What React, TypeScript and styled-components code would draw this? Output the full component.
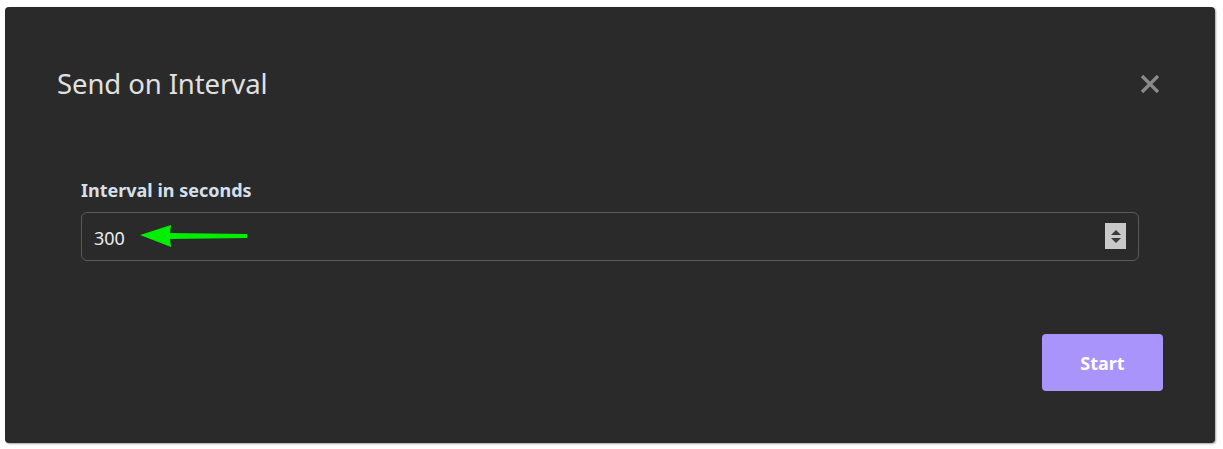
import React from "react";
import styled, { createGlobalStyle } from "styled-components";

const Global = createGlobalStyle`
  html, body { margin: 0; padding: 0; background: #ffffff; }
  body { font-family: "Noto Sans", "Open Sans", sans-serif; }
  * { box-sizing: border-box; }
`;

const Page = styled.div`
  padding: 7px 8px 6px 5px;
  width: 1223px;
  height: 449px;
`;

const Dialog = styled.div`
  width: 1210px;
  height: 436px;
  background: #2a2a2a;
  border-radius: 4px;
  box-shadow: 1px 1px 2px rgba(0, 0, 0, 0.35);
  display: flex;
  flex-direction: column;
  color: #e6e6e6;
`;

const Header = styled.div`
  display: flex;
  align-items: center;
  justify-content: space-between;
  padding: 59px 53px 0 52px;
  height: 95px;
`;

const Title = styled.h2`
  margin: 0;
  font-family: "Noto Sans", "Open Sans", sans-serif;
  font-weight: 400;
  font-size: 27.5px;
  line-height: 36px;
  color: #e0e0e0;
  letter-spacing: -0.1px;
`;

const Close = styled.button`
  border: none;
  background: transparent;
  padding: 0;
  width: 24px;
  height: 24px;
  display: flex;
  align-items: center;
  justify-content: center;
  cursor: pointer;
`;

const Body = styled.div`
  padding: 76px 76px 0 76px;
  display: flex;
  flex-direction: column;
`;

const Label = styled.label`
  font-weight: 700;
  font-size: 18px;
  line-height: 24px;
  color: #d6e0ea;
  margin-bottom: 10px;
`;

const InputWrap = styled.div`
  position: relative;
  height: 49px;
  border: 1px solid #5a5a5a;
  border-radius: 6px;
  display: flex;
  align-items: center;
  padding: 0 12px;
`;

const Value = styled.span`
  font-size: 18px;
  color: #e8eef5;
  line-height: 24px;
  margin-top: 2px;
`;

const Arrow = styled.svg`
  position: absolute;
  left: 58px;
  top: 10px;
`;

const Spinner = styled.div`
  position: absolute;
  right: 12px;
  top: 10px;
  width: 21px;
  height: 26px;
  background: #c9c9c9;
  display: flex;
  flex-direction: column;
  align-items: center;
  justify-content: center;
  gap: 3px;
`;

const Tri = styled.div<{ $down?: boolean }>`
  width: 0;
  height: 0;
  border-left: 5px solid transparent;
  border-right: 5px solid transparent;
  ${(p) =>
    p.$down
      ? "border-top: 5px solid #3a3a3a;"
      : "border-bottom: 5px solid #3a3a3a;"}
`;

const Footer = styled.div`
  margin-top: auto;
  display: flex;
  justify-content: flex-end;
  padding: 0 52px 52px 52px;
`;

const StartButton = styled.button`
  width: 121px;
  height: 57px;
  border: none;
  border-radius: 4px;
  background: #a994fb;
  color: #ffffff;
  font-family: "Noto Sans", "Open Sans", sans-serif;
  font-weight: 700;
  font-size: 18px;
  cursor: pointer;
`;

export default function App() {
  return (
    <>
      <Global />
      <Page>
        <Dialog>
          <Header>
            <Title>Send on Interval</Title>
            <Close aria-label="Close">
              <svg width="20" height="20" viewBox="0 0 20 20">
                <path
                  d="M2 2 L18 18 M18 2 L2 18"
                  stroke="#8a8a8a"
                  strokeWidth="3.2"
                  strokeLinecap="butt"
                />
              </svg>
            </Close>
          </Header>
          <Body>
            <Label>Interval in seconds</Label>
            <InputWrap>
              <Value>300</Value>
              <Arrow width="110" height="28" viewBox="0 0 110 28">
                <polygon points="0,12 31,2 30,10 107,11 107,15 30,16 31,24" fill="#00ee00" />
              </Arrow>
              <Spinner>
                <Tri />
                <Tri $down />
              </Spinner>
            </InputWrap>
          </Body>
          <Footer>
            <StartButton>Start</StartButton>
          </Footer>
        </Dialog>
      </Page>
    </>
  );
}
